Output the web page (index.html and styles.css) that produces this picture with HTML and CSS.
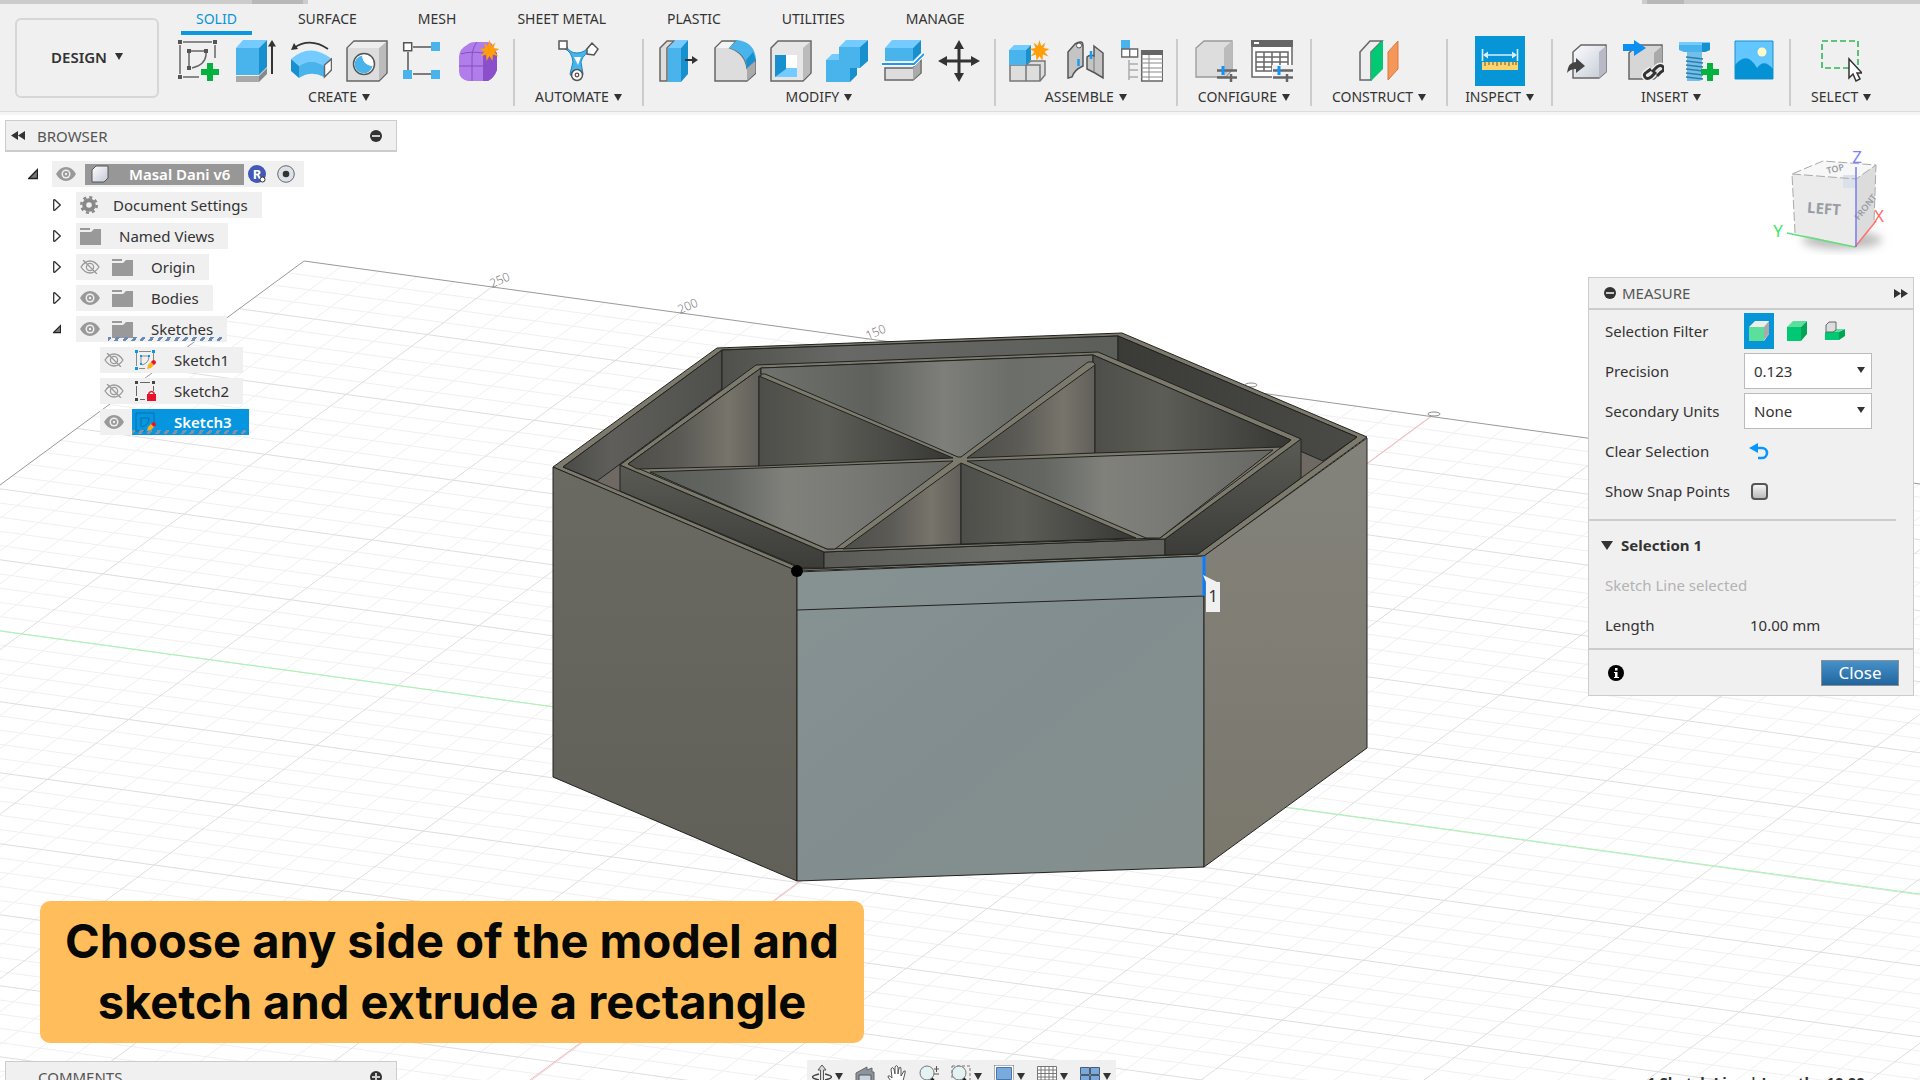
FILE: index.html
```html
<!DOCTYPE html>
<html lang="en">
<head>
<meta charset="utf-8">
<meta name="viewport" content="width=device-width, initial-scale=1">
<title>Masal Dani v6</title>
<link rel="stylesheet" href="styles.css">
</head>
<body>
<svg class="defs" aria-hidden="true">
  <defs>
    <linearGradient id="silver" x1="0" y1="0" x2="1" y2="1"><stop offset="0" stop-color="#fdfdff"/><stop offset="1" stop-color="#c3c9d4"/></linearGradient>
    <symbol id="eye" viewBox="0 0 20 14"><path d="M0 7Q4 0 10 0t10 7q-4 7-10 7T0 7z" fill="#999"/><circle cx="10" cy="7" r="4.5" fill="#f0f0f0"/><circle cx="10" cy="7" r="3" fill="#999"/><circle cx="10" cy="7" r="1.2" fill="#f0f0f0"/></symbol>
    <symbol id="eye-off" viewBox="0 0 20 14"><g fill="none" stroke="#999" stroke-width="1.3"><path d="M1 7q4-6 9-6t9 6q-4 6-9 6T1 7z"/><circle cx="10" cy="7" r="3.6"/><path d="M3 0l14 14"/></g></symbol>
    <symbol id="folder" viewBox="0 0 21 17"><path d="M0 0h10v2H0zM0 4h11l3-3h7v16H0z" fill="#999"/></symbol>
    <symbol id="closed" viewBox="0 0 8 12"><path d="M.7 1v10l1 .3L7.300 6 1.700.7z" fill="#fff" stroke="#333" stroke-width="1.300"/></symbol>
    <symbol id="open" viewBox="0 0 10 10"><path d="M9.500.5v9H.7z" fill="#777" stroke="#222" stroke-width="1.400"/></symbol>
    <symbol id="star" viewBox="0 0 20 22"><path d="M10 0l1.700 6L16 2.500 14 8l6 1-5 2.800 4 4.700-5.600-2L13 21l-3-5-3 5-.5-6.500-5.500 2 4-4.700L0 9l6-1-2-5.500L8.300 6z" fill="#ff9d0a"/></symbol>
    <symbol id="plus" viewBox="0 0 18 18"><path d="M6 0h6v6h6v6h-6v6H6v-6H0V6h6z" fill="#06b23f"/></symbol>
    <symbol id="sliders" viewBox="0 0 20 16"><path d="M0 4.500h20M0 11.500h20" stroke="#666" stroke-width="2.500"/><path d="M6 0v9" stroke="#0a96ff" stroke-width="3"/><path d="M14 8v8" stroke="#666" stroke-width="2.500"/></symbol>
  </defs>
</svg>

<header class="toolbar">
  <div class="tabstrip"><i class="strip strip-left"></i><i class="strip strip-right"></i></div>
  <div class="toolbar-main">
    <button class="workspace" type="button">DESIGN<i class="caret"></i></button>
    <div class="ribbon">
      <nav class="tabs">
        <a class="tab active" href="#solid">SOLID</a>
        <a class="tab" href="#surface">SURFACE</a>
        <a class="tab" href="#mesh">MESH</a>
        <a class="tab" href="#sheet">SHEET METAL</a>
        <a class="tab" href="#plastic">PLASTIC</a>
        <a class="tab" href="#utilities">UTILITIES</a>
        <a class="tab" href="#manage">MANAGE</a>
      </nav>
      <div class="groups">
        <section class="group">
          <div class="tools">
            <button class="tool" type="button" aria-label="Create sketch"><svg viewBox="0 0 42 42"><path d="M2 5v29M5 2h29M37 5v13M5 37h16M11 11v17M11 11h17v4Q27 25 14 28" fill="none" stroke="#666" stroke-width="1.500"/><path d="M0 0h4v4H0zM35 0h4v4h-4zM0 35h4v4H0zM9 9h4v4H9zM26 9h4v4h-4zM9 26h4v4H9z" fill="#555"/><use href="#plus" x="23" y="23" width="18" height="18"/></svg></button>
            <button class="tool" type="button" aria-label="Extrude"><svg viewBox="0 0 42 42"><path d="M2 36h23v6H2z" fill="#a9a9a9"/><path d="M25 36l8-8v6l-8 8z" fill="#888"/><path d="M2 8h23v27H2z" fill="#49b3ec"/><path d="M2 8l7-8h24l-8 8z" fill="#74cbff"/><path d="M25 8l8-8v27l-8 8z" fill="#1890cd"/><path d="M38 34V4" stroke="#333" stroke-width="2"/><path d="M34 6.500L38 0l4 6.500z" fill="#333"/></svg></button>
            <button class="tool" type="button" aria-label="Revolve"><svg viewBox="0 0 42 42"><path d="M1 19Q20 2 42 19l-8 7Q21 17 9 26z" fill="#74cbff"/><path d="M1 19l8 7v12l-8-7z" fill="#1890cd"/><path d="M9 26q12-9 25 0v11q-13-7-25 1z" fill="#49b3ec"/><path d="M34.500 25l7-6v11l-7 7z" fill="#fff" stroke="#666" stroke-width="1.500"/><path d="M4 8Q20-3 38 9" fill="none" stroke="#333" stroke-width="1.700"/><path d="M1 10l3-7 4 6z" fill="#333"/></svg></button>
            <button class="tool" type="button" aria-label="Hole"><svg viewBox="0 0 42 42"><path d="M1 8l7-7h33v32l-8 8H1z" fill="#ddd" stroke="#666" stroke-width="1.500"/><path d="M33 8l7-6v31l-7 7z" fill="#bbb"/><path d="M2 8l6-6h32l-7 6z" fill="#eee"/><circle cx="18" cy="24" r="10.500" fill="#fff" stroke="#555" stroke-width="1.500"/><path d="M16 15.500a9 9 0 1 0 10.500 10.500Q17 25 16 15.500z" fill="#49b3ec"/><path d="M16 15.500Q17 25 26.500 26q2-9-10.500-10.500z" fill="#fff"/></svg></button>
            <button class="tool" type="button" aria-label="Pattern"><svg viewBox="0 0 42 42"><path d="M11 7h18M6 12v18M11 34h18" stroke="#555" stroke-width="1.500"/><path d="M1.700 2.700h8v8h-8z" fill="#fff" stroke="#555" stroke-width="1.500"/><path d="M29 2h9v9h-9zM1 30h9v9H1zM29 30h9v9h-9z" fill="#49b3ec"/></svg></button>
            <button class="tool" type="button" aria-label="Create form"><svg viewBox="0 0 42 42"><path d="M9 5q3-3 8-3h12q5 0 6 4l4 10v14q-3 8-9 11H10q-9-2-9-10V17Q1 9 9 5z" fill="#b07dea"/><path d="M25 41V16q0-6 6-11l8 8v17q-3 8-9 11z" fill="#8b4fcb"/><path d="M1 26h25l13-5M14 41V18q0-10 5-16M3 14q9-3 22-1" fill="none" stroke="#8450c0"/><use href="#star" x="21" y="0" width="21" height="22"/></svg></button>
          </div>
          <button class="group-label" type="button">CREATE<i class="caret"></i></button>
        </section>
        <section class="group">
          <div class="tools">
            <button class="tool" type="button" aria-label="Automate"><svg viewBox="0 0 42 42"><path d="M6 8q9 3 10 14l-3 12a7 7 0 0 0 13 0l-2-12q2-9 13-12l-4-5q-5 8-13 8T9 5z" fill="#49b3ec" stroke="#1c86bd"/><path d="M17 17h7l-3 8z" fill="#fff"/><path d="M2 1h8v8H2zM30 9l5-6 6 6-4 6-7-1z" fill="#fff" stroke="#555" stroke-width="1.500"/><circle cx="20" cy="35" r="5.500" fill="#fff" stroke="#555" stroke-width="1.500"/><circle cx="20" cy="35" r="1.800" fill="none" stroke="#555" stroke-width="1.300"/></svg></button>
          </div>
          <button class="group-label" type="button">AUTOMATE<i class="caret"></i></button>
        </section>
        <section class="group wide">
          <div class="tools">
            <button class="tool" type="button" aria-label="Press pull"><svg viewBox="0 0 42 42"><path d="M9 1L2 8v33h7V8l7-7z" fill="#ddd" stroke="#666" stroke-width="1.500"/><path d="M10 8h13v34H10z" fill="#49b3ec"/><path d="M10 8l8-8h12l-7 8z" fill="#74cbff"/><path d="M23 8l7-8v34l-7 8z" fill="#1890cd"/><path d="M27 20h9" stroke="#333" stroke-width="2"/><path d="M34 16l6 4-6 4z" fill="#333"/></svg></button>
            <button class="tool" type="button" aria-label="Fillet"><svg viewBox="0 0 42 42"><path d="M1 8l7-7h14L16 8q15 5 17 20l9-8v13l-9 8H1z" fill="#ddd" stroke="#666" stroke-width="1.500"/><path d="M2 8l6-6h12l-5 6z" fill="#f4f4f4"/><path d="M33 28l8-7v12l-8 8z" fill="#aaa"/><path d="M15 8l8-8q18 2 19 20l-9 8Q31 12 15 8z" fill="#49b3ec"/><path d="M42 20l-9 8-1-8 7-8z" fill="#1890cd"/></svg></button>
            <button class="tool" type="button" aria-label="Shell"><svg viewBox="0 0 42 42"><path d="M1 8l7-7h33v32l-8 8H1z" fill="#e6e6e6" stroke="#666" stroke-width="1.500"/><path d="M33 8l7-6v31l-7 7z" fill="#bbb"/><path d="M5 15h22v22H5z" fill="#74cbff"/><path d="M5 15h11v14L5 37z" fill="#1890cd"/><path d="M16 15h11v13H16z" fill="#fff"/></svg></button>
            <button class="tool" type="button" aria-label="Combine"><svg viewBox="0 0 42 42"><path d="M0 20h13V7h21v21H24v14H0z" fill="#49b3ec"/><path d="M13 7l7-7h22l-8 7zM0 20l6-6h7v6z" fill="#74cbff"/><path d="M34 7l8-7v21l-8 7zM24 28h7v7l-7 7z" fill="#1890cd"/></svg></button>
            <button class="tool" type="button" aria-label="Split body"><svg viewBox="0 0 42 42"><path d="M3 28h28l8-8v13l-8 7H3z" fill="#ddd" stroke="#666" stroke-width="1.500"/><path d="M31 28l7-7v12l-7 7z" fill="#aaa"/><path d="M3 8h28v13H3z" fill="#49b3ec"/><path d="M3 8l7-8h29l-8 8z" fill="#74cbff"/><path d="M31 8l8-8v13l-8 8z" fill="#1890cd"/><path d="M0 24h32l10-10" fill="none" stroke="#fff" stroke-width="4"/><path d="M0 24h32l10-10" fill="none" stroke="#189cf0" stroke-width="1.800"/></svg></button>
            <button class="tool" type="button" aria-label="Move"><svg viewBox="0 0 42 42"><path d="M21 5v32M5 21h32" stroke="#333" stroke-width="3"/><path d="M21 0l5 9H16zM21 42l5-9H16zM0 21l9-5v10zM42 21l-9-5v10z" fill="#333"/></svg></button>
          </div>
          <button class="group-label" type="button">MODIFY<i class="caret"></i></button>
        </section>
        <section class="group">
          <div class="tools">
            <button class="tool" type="button" aria-label="New component"><svg viewBox="0 0 42 42"><path d="M1 25h16v16H1zM17 25l5-4h14v14l-5 6H17z" fill="#ddd" stroke="#777" stroke-width="1.500"/><path d="M17 25h14v16" fill="none" stroke="#777" stroke-width="1.500"/><path d="M0 10h17v15H0z" fill="#49b3ec"/><path d="M0 10l5-5h17l-5 5z" fill="#74cbff"/><path d="M17 10l5-5v15l-5 5z" fill="#1890cd"/><use href="#star" x="20" y="0" width="21" height="22"/></svg></button>
            <button class="tool" type="button" aria-label="Joint"><svg viewBox="0 0 42 42"><path d="M3 38V12l7-8q8-5 8 2v20q-9 4-11 11z" fill="#c4c4c4" stroke="#555" stroke-width="1.500"/><circle cx="14" cy="5.500" r="2.500" fill="#fff" stroke="#555"/><path d="M29 6l9 7v25l-8-5-8-4V17q3-3 7-1z" fill="#c4c4c4" stroke="#555" stroke-width="1.500"/><path d="M29 16v16" stroke="#777"/><path d="M13.500 19v7M26 11v8" stroke="#189cf0" stroke-width="2.500"/></svg></button>
            <button class="tool" type="button" aria-label="Bill of materials"><svg viewBox="0 0 42 42"><path d="M0 0h9v9H0z" fill="#49b3ec"/><path d="M.7 9h8v8H.700zM8.700 9h8v8h-8z" fill="#fff" stroke="#666" stroke-width="1.300"/><path d="M8 20v20M8 24h9M8 30h9M8 37h9" stroke="#aaa" stroke-width="1.500"/><path d="M20.700 11h21v30h-21z" fill="#fff" stroke="#666" stroke-width="1.500"/><path d="M20 10h22v5H20z" fill="#666"/><path d="M20 19h22M20 23h22M20 28h22M20 32h22M20 37h22M28 15v26" stroke="#888"/></svg></button>
          </div>
          <button class="group-label" type="button">ASSEMBLE<i class="caret"></i></button>
        </section>
        <section class="group">
          <div class="tools">
            <button class="tool" type="button" aria-label="Configure"><svg viewBox="0 0 42 42"><path d="M1 8l8-7h28v29l-6 7H1z" fill="#ddd" stroke="#999" stroke-width="1.300"/><path d="M29 8l8-7v27l-8 8z" fill="#bbb"/><use href="#sliders" x="22" y="26" width="20" height="16"/></svg></button>
            <button class="tool" type="button" aria-label="Configuration table"><svg viewBox="0 0 42 42"><path d="M1 1h40v36H1z" fill="#fff" stroke="#666" stroke-width="1.500"/><path d="M0 0h42v7H0z" fill="#666"/><path d="M3 2h5v2H3z" fill="#fff"/><path d="M5 12h32v19H5zM5 17h32M5 22h32M5 27h32M13 12v19M21 12v19M29 12v19" fill="none" stroke="#666" stroke-width="1.500"/><path d="M21 25h21v17H21z" fill="#f0f0f0"/><use href="#sliders" x="22" y="26" width="20" height="16"/></svg></button>
          </div>
          <button class="group-label" type="button">CONFIGURE<i class="caret"></i></button>
        </section>
        <section class="group">
          <div class="tools">
            <button class="tool" type="button" aria-label="Construction plane"><svg viewBox="0 0 42 42"><path d="M2 12L12 1h12L13 12v28H2z" fill="#eee" stroke="#666" stroke-width="1.500"/><path d="M13 12L25 0v29L13 41z" fill="#00c873"/><path d="M30 12L40 1v28L30 40z" fill="#f5975a" stroke="#d97b3f"/></svg></button>
          </div>
          <button class="group-label" type="button">CONSTRUCT<i class="caret"></i></button>
        </section>
        <section class="group narrow">
          <div class="tools">
            <button class="tool pressed" type="button" aria-label="Measure"><svg viewBox="0 0 50 50"><path d="M7.500 13v12M42.500 13v12M10 19h30" stroke="#d9eefb" stroke-width="1.600"/><path d="M8 19l5-3.500v7zM42 19l-5-3.500v7z" fill="#d9eefb"/><path d="M7 26h36v8H7z" fill="#ffd36b"/><path d="M10 26v4M14 26v3M18 26v3M22 26v4M26 26v3M30 26v3M34 26v4M38 26v3M41 26v3" stroke="#775" stroke-width="1.300"/></svg></button>
          </div>
          <button class="group-label" type="button">INSPECT<i class="caret"></i></button>
        </section>
        <section class="group">
          <div class="tools">
            <button class="tool" type="button" aria-label="Insert derive"><svg viewBox="0 0 42 42"><path d="M7 12l8-7h25v27l-7 6H7z" fill="url(#silver)" stroke="#666" stroke-width="1.500"/><path d="M33 12l7-6v26l-7 6z" fill="#b7bac6"/><path d="M1 33q1-11 9-11v-4l9 8-9 7v-4q-6 0-9 4z" fill="#444"/></svg></button>
            <button class="tool" type="button" aria-label="Insert linked"><svg viewBox="0 0 42 42"><path d="M7 13l8-8h25v27l-8 7H7z" fill="#d6d6d6" stroke="#666" stroke-width="1.500"/><path d="M32 13l8-7v26l-8 6z" fill="#aaa"/><path d="M1 4h11V0l12 8-12 8v-5H1z" fill="#0b8ff0"/><path d="M30 32l5-5q4-3 6 0t-2 5l-4 4M34 32l-5 5q-4 3-6 0t2-5l4-3" fill="none" stroke="#f0f0f0" stroke-width="6"/><path d="M30 32l5-5q4-3 6 0t-2 5l-4 4M34 32l-5 5q-4 3-6 0t2-5l4-3" fill="none" stroke="#333" stroke-width="3"/></svg></button>
            <button class="tool" type="button" aria-label="Insert fastener"><svg viewBox="0 0 42 42"><path d="M1 2h31v8l-5 2H6l-5-2z" fill="#49b3ec"/><path d="M1 2h31v3H1z" fill="#74cbff"/><path d="M24 3h8v7l-5 2h-3z" fill="#1890cd"/><path d="M9 12h15v28l-3 1H9z" fill="#74bfe8"/><path d="M8 17l17 2M8 21l17 2M8 25l17 2M8 29l17 2M8 33l17 2M8 37l17 2" stroke="#2b7eb0" stroke-width="1.500"/><use href="#plus" x="23" y="23" width="18" height="18"/></svg></button>
            <button class="tool" type="button" aria-label="Insert image"><svg viewBox="0 0 42 42"><path d="M1 1h38v38H1z" fill="#63c6ff" stroke="#1890cd"/><path d="M1 39V25q12-15 22 3 7-10 16 1v10z" fill="#0592d4"/><circle cx="28" cy="12" r="4.500" fill="#fdfbc6"/></svg></button>
          </div>
          <button class="group-label" type="button">INSERT<i class="caret"></i></button>
        </section>
        <section class="group">
          <div class="tools">
            <button class="tool" type="button" aria-label="Select"><svg viewBox="0 0 42 42"><path d="M2 1h36v27H2z" fill="none" stroke="#2fb558" stroke-width="1.600" stroke-dasharray="6 3"/><path d="M29 19v19l4-4 3 7 4-2-3-6h5z" fill="#fff" stroke="#333" stroke-width="1.500"/></svg></button>
          </div>
          <button class="group-label" type="button">SELECT<i class="caret"></i></button>
        </section>
      </div>
    </div>
  </div>
</header>

<main class="stage">
  <svg class="scene" viewBox="0 115 1920 965" preserveAspectRatio="xMidYMid slice" role="img" aria-label="Hexagonal box model">
    <defs>
      <linearGradient id="side-left" x1="0" y1="0" x2="0" y2="1"><stop offset="0" stop-color="#6a6962"/><stop offset="1" stop-color="#605f58"/></linearGradient>
      <linearGradient id="side-right" x1="0" y1="0" x2="0" y2="1"><stop offset="0" stop-color="#84837b"/><stop offset="1" stop-color="#7a776d"/></linearGradient>
      <linearGradient id="front" x1="0" y1="0" x2="1" y2="1"><stop offset="0" stop-color="#879293"/><stop offset=".5" stop-color="#828d8f"/><stop offset="1" stop-color="#848f8d"/></linearGradient>
      <linearGradient id="nw" x1="0" y1="0" x2="1" y2="0"><stop offset="0" stop-color="#494a46"/><stop offset=".3" stop-color="#5f5e5a"/><stop offset="1" stop-color="#4f504b"/></linearGradient>
      <linearGradient id="n" x1="0" y1="0" x2="1" y2="0"><stop offset="0" stop-color="#4f504b"/><stop offset=".3" stop-color="#686966"/><stop offset="1" stop-color="#5c5e5a"/></linearGradient>
      <linearGradient id="ne" x1="0" y1="0" x2="1" y2="0"><stop offset="0" stop-color="#3a3b37"/><stop offset="1" stop-color="#4a4b47"/></linearGradient>
      <linearGradient id="dark" x1="0" y1="0" x2="1" y2="0"><stop offset="0" stop-color="#4d4e49"/><stop offset=".35" stop-color="#5d5d57"/><stop offset="1" stop-color="#363734"/></linearGradient>
      <linearGradient id="bay" x1="0" y1="0" x2="1" y2="0"><stop offset="0" stop-color="#5a5c58"/><stop offset=".25" stop-color="#646662"/><stop offset=".45" stop-color="#80817b"/><stop offset=".65" stop-color="#797a75"/><stop offset="1" stop-color="#666762"/></linearGradient>
      <linearGradient id="bay-back" x1="0" y1="0" x2="1" y2="0"><stop offset="0" stop-color="#70726e"/><stop offset=".33" stop-color="#5f615c"/><stop offset=".55" stop-color="#7e7f7a"/><stop offset=".75" stop-color="#6c6e69"/><stop offset="1" stop-color="#70716c"/></linearGradient>
      <linearGradient id="lit" x1="0" y1="0" x2="1" y2="0"><stop offset="0" stop-color="#4d4d49"/><stop offset=".4" stop-color="#5b5a55"/><stop offset=".75" stop-color="#77746b"/><stop offset="1" stop-color="#615f59"/></linearGradient>
      <linearGradient id="well" x1="0" y1="0" x2="0" y2="1"><stop offset="0" stop-color="#5b5b56"/><stop offset="1" stop-color="#3c3c38"/></linearGradient>
      <linearGradient id="lip" x1="0" y1="0" x2="1" y2="0"><stop offset="0" stop-color="#5a5b56"/><stop offset=".5" stop-color="#6b6d68"/><stop offset="1" stop-color="#62635e"/></linearGradient>
      <filter id="soft" x="-30%" y="-30%" width="160%" height="160%"><feGaussianBlur stdDeviation="5"/></filter>
    </defs>
    <g class="grid">
      <path id="grid-minor" class="minor"/>
      <path id="grid-major" class="major"/>
      <path class="edge" d="M0 485L304 261 1920 484"/>
      <path class="axis-y" d="M0 631L1920 894"/>
      <path class="axis-x" d="M1430 417L530 1080"/>
    </g>
    <g class="ticks">
      <text transform="translate(492 288) rotate(-24)">250</text>
      <text transform="translate(680 314) rotate(-24)">200</text>
      <text transform="translate(868 340) rotate(-24)">150</text>
      <ellipse cx="1251" cy="385" rx="6" ry="2"/>
      <ellipse cx="1434" cy="414" rx="6" ry="2"/>
    </g>
    <g class="model">
      <path class="rim" d="M553 467L717 348 1122 333 1367 437 1204 556 797 571z"/>
      <path fill="#6e6962" d="M563 467L722 350 1118 336 1357 437 1198 554 802 569z"/>
      <path fill="url(#nw)" d="M563 467L722 350V389L597 481z"/>
      <path fill="url(#n)" d="M722 350L1118 336V400L722 400z"/>
      <path fill="url(#ne)" d="M1118 336L1357 437 1323 461 1118 372z"/>
      <path fill="url(#well)" d="M620 465L824 552V568H802L620 491z"/>
      <path fill="url(#lip)" d="M824 552L1165 539V555L824 568z"/>
      <path fill="url(#well)" d="M1165 539L1301 439V478L1198 554 1165 555z"/>
      <path class="rim" d="M620 465L756 365 1098 352 1301 439 1165 539 824 552z"/>
      <path class="rim" d="M628 464L761 368 1093 355 1291 440 1160 538 827 549z"/>
      <path fill="url(#lit)" d="M628 464L761 368V376H759V466L637 469z"/>
      <path fill="url(#dark)" d="M759 376L953 458 759 466z"/>
      <path fill="url(#bay-back)" d="M761 368L1093 355V362H1088L961 457H958L765 374H761z"/>
      <path fill="url(#lit)" d="M1095 365V453L967 458z"/>
      <path fill="url(#dark)" d="M1093 355L1291 440 1282 447 1095 453V364L1093 362z"/>
      <path fill="url(#bay)" d="M967 461L1273 450 1160 538H1146z"/>
      <path fill="url(#lit)" d="M961 463V544L843 549z"/>
      <path fill="url(#dark)" d="M961 463L1136 538 961 544z"/>
      <path fill="url(#bay)" d="M650 472L953 461 835 549H827z"/>
      <path class="face" fill="url(#side-left)" d="M553 467L797 571V881L553 777z"/>
      <path class="face" fill="url(#front)" d="M797 572L1204 556V867L797 881z"/>
      <path class="face" fill="url(#side-right)" d="M1204 556L1367 438V748L1204 867z"/>
      <path class="seam" d="M797 610L1204 596"/>
      <path class="picked" d="M1204 556V596"/>
      <circle cx="797" cy="571" r="6" fill="#000"/>
      <path d="M1203 575L1217 582H1220V612H1206V582z" fill="#f0f0f0"/>
      <text class="tag" x="1213" y="602">1</text>
    </g>
  </svg>

  <section class="browser">
    <header class="panel-head">
      <svg class="rewind" viewBox="0 0 14 9"><path d="M7 0v9L0 4.500zM14 0v9L7 4.500z"/></svg>
      <h2>BROWSER</h2>
      <button class="dot" type="button" aria-label="Collapse browser"></button>
    </header>
    <ul class="tree">
      <li class="row root"><svg class="twist"><use href="#open"/></svg>
        <div class="cell"><svg class="eye"><use href="#eye"/></svg><span class="doc"><svg viewBox="0 0 18 18"><path d="M1 5l4-4h12v12l-4 4H1z" fill="url(#silver)" stroke="#555"/></svg>Masal Dani v6</span><svg class="badge" viewBox="0 0 18 18"><circle cx="9" cy="9" r="9" fill="#4459b5"/><text x="9" y="14">R</text><circle cx="14.500" cy="14.500" r="2.500" fill="#fff" stroke="#333"/></svg><svg class="badge target" viewBox="0 0 18 18"><circle cx="9" cy="9" r="8.300" fill="#dde1e8" stroke="#666"/><circle cx="9" cy="9" r="3.300" fill="#333"/></svg></div></li>
      <li class="row"><svg class="twist"><use href="#closed"/></svg>
        <div class="cell"><svg class="gear" viewBox="0 0 18 18"><circle cx="9" cy="9" r="4.800" fill="none" stroke="#888" stroke-width="4"/><circle cx="9" cy="9" r="7.700" fill="none" stroke="#888" stroke-width="2.600" stroke-dasharray="3 3.050"/></svg><span class="name near">Document Settings</span></div></li>
      <li class="row"><svg class="twist"><use href="#closed"/></svg>
        <div class="cell"><svg class="folder"><use href="#folder"/></svg><span class="name">Named Views</span></div></li>
      <li class="row"><svg class="twist"><use href="#closed"/></svg>
        <div class="cell"><svg class="eye"><use href="#eye-off"/></svg><svg class="folder"><use href="#folder"/></svg><span class="name">Origin</span></div></li>
      <li class="row"><svg class="twist"><use href="#closed"/></svg>
        <div class="cell"><svg class="eye"><use href="#eye"/></svg><svg class="folder"><use href="#folder"/></svg><span class="name">Bodies</span></div></li>
      <li class="row"><svg class="twist"><use href="#open"/></svg>
        <div class="cell hatched"><svg class="eye"><use href="#eye"/></svg><svg class="folder"><use href="#folder"/></svg><span class="name">Sketches</span></div></li>
      <li class="row leaf">
        <div class="cell"><svg class="eye"><use href="#eye-off"/></svg><svg class="sketch" viewBox="0 0 21 20"><path d="M1.500 3v13M4 1.500h12M18.500 3v8M4 18.500h6M6 6v9M6 6h8q0 7-7 9" fill="none" stroke="#888"/><path d="M0 0h3v3H0zM17 0h3v3h-3zM0 17h3v3H0zM5 5h2v2H5zM13 5h2v2h-2zM5 13h2v2H5z" fill="#0a96ea"/><path d="M12 19l1-4 4-4 3 3-4 4z" fill="#f8b21b"/><path d="M16 12l2-2q3 0 3 3l-2 2z" fill="#e8132b"/></svg><span class="name">Sketch1</span></div></li>
      <li class="row leaf">
        <div class="cell"><svg class="eye"><use href="#eye-off"/></svg><svg class="sketch" viewBox="0 0 21 20"><path d="M1.500 5v10M5 1.500h10M18.500 5v5M5 18.500h5" fill="none" stroke="#666"/><path d="M0 0h3v3H0zM17 0h3v3h-3zM0 17h3v3H0z" fill="#444"/><path d="M14 14v-2q2.500-3 5 0v2" fill="none" stroke="#e8132b" stroke-width="1.500"/><path d="M12 13h9v7h-9z" fill="#e8132b"/></svg><span class="name">Sketch2</span></div></li>
      <li class="row leaf">
        <div class="cell split"><svg class="eye"><use href="#eye"/></svg><div class="selected hatched"><svg class="sketch" viewBox="0 0 21 20"><path d="M1 1h18v10M1 1v18h9M6 6v9M6 6h8q0 7-7 9" fill="none" stroke="#0a6fae"/><path d="M12 19l1-4 4-4 3 3-4 4z" fill="#f8b21b"/><path d="M16 12l2-2q3 0 3 3l-2 2z" fill="#e8132b"/></svg><span class="name">Sketch3</span></div></div></li>
    </ul>
  </section>

  <svg class="viewcube" viewBox="1770 140 124 125" role="img" aria-label="View cube">
    <ellipse cx="1842" cy="240" rx="40" ry="9" fill="#bbb" filter="url(#soft)"/>
    <path d="M1792 174L1823 161 1876 165 1856 179z" fill="#f7f7f7"/>
    <path d="M1856 179L1876 165 1874 222 1855 247z" fill="#dcdcdd"/>
    <path d="M1792 174L1856 179 1855 247 1795 233z" fill="#ebebec"/>
    <path d="M1843 175h13v13h-13z" fill="#dbe1e8"/>
    <path d="M1795 233L1792 174 1823 161 1876 165 1874 222M1792 174L1856 179 1876 165" fill="none" stroke="#aaa" stroke-dasharray="9 3"/>
    <text class="cube-face" transform="rotate(4 1824 209)" x="1824" y="214">LEFT</text>
    <text class="cube-side" transform="translate(1868 209) rotate(-52)">FRONT</text>
    <text class="cube-side" transform="translate(1836 172) rotate(-14)">TOP</text>
    <path d="M1787 233L1855 247" stroke="#5fe07a" stroke-width="1.500"/>
    <path d="M1855 247L1876 221" stroke="#ff7070" stroke-width="1.500"/>
    <path d="M1856 167V247" stroke="#7a7af0" stroke-width="1.500"/>
    <text class="axis" x="1857" y="163" fill="#7f7fff">Z</text>
    <text class="axis" x="1879" y="222" fill="#ff6b6b">X</text>
    <text class="axis" x="1778" y="237" fill="#3de868">Y</text>
  </svg>

  <form class="measure">
    <header class="panel-head">
      <button class="dot" type="button" aria-label="Collapse measure"></button>
      <h2>MEASURE</h2>
      <svg class="rewind" viewBox="0 0 14 9"><path d="M0 0v9l7-4.500zM7 0v9l7-4.500z"/></svg>
    </header>
    <div class="fields">
      <div class="field"><span class="key">Selection Filter</span>
        <div class="filters">
          <button class="filter on" type="button" aria-label="Faces"><svg viewBox="0 0 20 20"><path d="M0 6l6-6h14v13l-5 7H0z" fill="#eee"/><path d="M15 6l5-6v13l-5 6z" fill="#aaa"/><path d="M0 6h15v14H0z" fill="#5cdf9b"/></svg></button>
          <button class="filter" type="button" aria-label="Bodies"><svg viewBox="0 0 20 20"><path d="M0 6h14v14H0z" fill="#00c873"/><path d="M0 6l6-6h14l-6 6z" fill="#5cdf9b"/><path d="M14 6l6-6v13l-6 7z" fill="#00a653"/></svg></button>
          <button class="filter" type="button" aria-label="Components"><svg viewBox="0 0 20 20"><path d="M0 11h14v8H0z" fill="#00c873"/><path d="M14 11l5-3h-9l-2 3z" fill="#5cdf9b"/><path d="M14 11l6-3v7l-6 4z" fill="#00a653"/><path d="M1 4l3-3h7v8l-3 2H1z" fill="#ddd" stroke="#666"/></svg></button>
        </div></div>
      <div class="field"><label class="key" for="precision">Precision</label>
        <span class="picker"><select id="precision"><option>0.123</option></select></span></div>
      <div class="field"><label class="key" for="units">Secondary Units</label>
        <span class="picker"><select id="units"><option>None</option></select></span></div>
      <div class="field"><span class="key">Clear Selection</span>
        <button class="undo" type="button" aria-label="Clear selection"><svg viewBox="0 0 20 17"><path d="M5 5h8a5 5 0 0 1 0 10H9" fill="none" stroke="#0a96ff" stroke-width="2.600"/><path d="M0 5l9-5v10z" fill="#0a96ff"/></svg></button></div>
      <div class="field"><label class="key" for="snap">Show Snap Points</label>
        <input id="snap" class="tick" type="checkbox"></div>
    </div>
    <div class="result">
      <h3><i class="caret big"></i>Selection 1</h3>
      <p class="hint">Sketch Line selected</p>
      <div class="field"><span class="key">Length</span><output class="value">10.00 mm</output></div>
    </div>
    <footer class="measure-foot">
      <svg class="info" viewBox="0 0 16 16"><circle cx="8" cy="8" r="8"/><path d="M7 3h2.500v2.500H7zM6 7h3.500v5H11v1H6v-1h1V8H6z" fill="#fff"/></svg>
      <button class="close" type="button">Close</button>
    </footer>
  </form>

  <p class="caption">Choose any side of the model and sketch and extrude a rectangle</p>

  <section class="comments panel-head">
    <h2>COMMENTS</h2>
    <button class="dot add" type="button" aria-label="Expand comments"></button>
  </section>

  <nav class="viewbar" aria-label="Navigation">
    <button type="button" aria-label="Orbit"><svg viewBox="0 0 20 20"><path d="M10 0l4 5h-2.500v13h-3V5H6z" fill="#ddd" stroke="#555"/><path d="M7 9q-13 3 0 6M13 9q13 3 0 6" fill="none" stroke="#444" stroke-width="1.500"/></svg><i class="caret"></i></button>
    <button type="button" aria-label="Look at"><svg viewBox="0 0 20 20"><path d="M1 8l11-6v3l5-2v4h2v13H1z" fill="#8d939c" stroke="#666"/><path d="M4 10h12v9H4z" fill="#c9d2df" stroke="#555"/></svg></button>
    <button type="button" aria-label="Pan"><svg viewBox="0 0 20 20"><path d="M6 20Q3 14 1 12q0-3 4 1L4 4q1-3 3 0l1 5V2q1-3 3 0v7l1-6q2-2 2 1v7l3-5q2-1 1 2l-3 12" fill="#fff" stroke="#555"/></svg></button>
    <button type="button" aria-label="Zoom"><svg viewBox="0 0 20 20"><path d="M12 13l5 6" stroke="#222" stroke-width="3"/><circle cx="8" cy="8" r="7" fill="#e3f3f3" stroke="#777"/><path d="M15 4h5M17.500 1v6M15 9h5" stroke="#555"/></svg></button>
    <button type="button" aria-label="Zoom window"><svg viewBox="0 0 20 20"><path d="M1 1h18v18H1z" fill="none" stroke="#777" stroke-dasharray="3 2"/><path d="M12 13l5 6" stroke="#222" stroke-width="3"/><circle cx="8" cy="8" r="7" fill="#e3f3f3" stroke="#777"/></svg><i class="caret"></i></button>
    <button type="button" aria-label="Display settings"><svg viewBox="0 0 20 20"><path d="M0 0h20v17H0z" fill="#fff" stroke="#666"/><path d="M2.500 2.500h15v12h-15z" fill="#7aa9dc" stroke="#4677ad"/></svg><i class="caret"></i></button>
    <button type="button" aria-label="Grid and snaps"><svg viewBox="0 0 20 20"><path d="M.5 1.500h19v17H.5zM.5 5h19M.5 8.500h19M.5 12h19M.5 15h19M4 1v18M8 1v18M12 1v18M16 1v18" fill="#fff" stroke="#777"/></svg><i class="caret"></i></button>
    <button type="button" aria-label="Viewports"><svg viewBox="0 0 20 20"><path d="M.5 2.500h9v7h-9zM10.500 2.500h9v7h-9zM.5 10.500h9v7h-9zM10.500 10.500h9v7h-9z" fill="#7aa9dc" stroke="#4a5c70"/></svg><i class="caret"></i></button>
  </nav>
  <p class="status">1 Sketch Line | Length : 10.00 mm</p>
</main>
<script src="grid.js"></script>
</body>
</html>
```
FILE: styles.css
```css
* { box-sizing: border-box; }
body {
  margin: 0;
  height: 100vh;
  display: flex;
  flex-direction: column;
  overflow: hidden;
  background: #fff;
  color: #333;
  font-family: "Noto Sans", "Open Sans", sans-serif;
  font-size: 15px;
  line-height: 20px;
}
button { margin: 0; padding: 0; border: 0; background: none; color: inherit; font: inherit; }
h2, h3, p, ul { margin: 0; padding: 0; font-size: 15px; font-weight: 400; list-style: none; }
svg { display: block; flex: none; }
.defs { position: absolute; width: 0; height: 0; }
.caret {
  display: inline-block;
  border: 4px solid transparent;
  border-top: 7px solid #333;
  border-bottom: 0;
}
.caret.big { border-width: 9px 6px 0; }

/* toolbar */
.toolbar { flex: none; background: #f0f0f0; border-bottom: 3px solid #f5f5f5; }
.tabstrip { display: flex; justify-content: space-between; height: 4px; }
.strip-left { width: 308px; background: linear-gradient(90deg, #ccc 252px, #b8b8b8 252px 303px, #ccc 303px); }
.strip-right { width: 278px; background: linear-gradient(90deg, #ccc 5px, #b8b8b8 5px 42px, #ccc 42px); }
.toolbar-main { display: flex; height: 108px; padding-left: 15px; border-bottom: 1px solid #dcdcdc; }
.workspace {
  display: flex;
  align-items: center;
  justify-content: center;
  gap: 8px;
  width: 144px;
  height: 80px;
  margin: 14px 6px 0 0;
  padding-bottom: 3px;
  border: 2px solid #d6d6d6;
  border-radius: 6px;
  font-weight: 600;
}
.ribbon { flex: 1; min-width: 0; }
.tabs { display: flex; gap: 31px; padding-left: 16px; }
.tab { padding: 5px 15px 2px; border-bottom: 4px solid transparent; color: #333; font-size: 14px; line-height: 20px; text-decoration: none; white-space: nowrap; }
.tab.active { color: #0696d7; border-color: #0a98df; }
.groups { display: flex; margin-top: 4px; }
.group { display: flex; flex-direction: column; align-items: center; height: 67px; padding: 0 13px; border-right: 2px solid #ccc; }
.group.wide { padding: 0 14px; }
.group.narrow { padding: 0 10px; }
.group:last-child { border-right: 0; }
.tools { display: flex; justify-content: center; gap: 14px; height: 42px; margin-top: 1px; }
.tool svg { width: 42px; height: 42px; }
.tool.pressed { height: 50px; margin-top: -4px; background: #0696d7; }
.tool.pressed svg { width: 50px; height: 50px; }
.group-label { display: flex; align-items: center; gap: 5px; margin-top: 5px; padding: 0 7px; font-size: 14px; line-height: 20px; white-space: nowrap; }

/* canvas */
.stage { position: relative; flex: 1; min-height: 0; overflow: hidden; }
.scene { width: 100%; height: 100%; }
.grid path { fill: none; stroke-width: 1; }
.grid .minor { stroke: #f0f0f0; }
.grid .major { stroke: #dedede; }
.grid .edge { stroke: #999; }
.grid .axis-y { stroke: #a5f7ae; }
.grid .axis-x { stroke: #fbb5b5; }
.ticks text { fill: #666; font-size: 12px; font-family: "Open Sans", sans-serif; font-weight: 300; }
.ticks ellipse { fill: none; stroke: #888; }
.model path { stroke: #22221f; stroke-width: 1; stroke-linejoin: round; }
.model .rim { fill: #7c796d; }
.model .picked { stroke: #0a7cff; stroke-width: 3; }
.model path[fill="#f0f0f0"] { stroke: none; }
.tag { fill: #333; font-size: 16px; text-anchor: middle; }

/* panels */
.panel-head { display: flex; align-items: center; background: #f0f0f0; border: 1px solid #ccc; }
.panel-head h2 { color: #555; }
.rewind { width: 14px; height: 9px; fill: #333; }
.dot { position: relative; width: 12px; height: 12px; border-radius: 6px; background: #333; }
.dot::before, .dot.add::after { content: ""; position: absolute; left: 2px; top: 5px; width: 8px; height: 2px; background: #ccc; }
.dot.add::after { left: 5px; top: 2px; width: 2px; height: 8px; }
.browser { position: absolute; left: 5px; top: 5px; width: 392px; }
.browser .panel-head { height: 32px; padding: 0 14px 0 5px; border-bottom-width: 2px; }
.browser h2 { flex: 1; padding-left: 12px; }
.tree { display: grid; gap: 5px; padding-top: 9px; }
.row { display: flex; align-items: center; padding-left: 48px; }
.row.root { padding-left: 23px; }
.row.leaf { padding-left: 95px; }
.twist { width: 8px; height: 12px; margin-right: 15px; }
.root .twist { width: 10px; margin-right: 14px; }
.cell { display: flex; align-items: center; height: 26px; padding: 0 14px 0 4px; background: #f0f0f0; }
.root .cell { padding-right: 9px; }
.eye { width: 20px; height: 14px; margin-right: 12px; }
.root .eye { margin-right: 9px; }
.folder { width: 21px; height: 17px; }
.gear { width: 18px; height: 18px; }
.sketch { width: 21px; height: 20px; }
.name { padding-left: 18px; white-space: nowrap; }
.name.near { padding-left: 15px; }
.leaf .eye { margin-right: 11px; }
.doc { display: flex; align-items: center; gap: 20px; height: 21px; padding: 0 14px 0 6px; background: #979797; color: #fff; font-weight: 600; white-space: nowrap; }
.doc svg { width: 18px; height: 18px; }
.badge { width: 18px; height: 18px; margin-left: 4px; }
.badge.target { margin-left: 11px; }
.badge text { fill: #fff; font-size: 13px; font-weight: 700; text-anchor: middle; }
.hatched { position: relative; }
.hatched::after {
  content: "";
  position: absolute;
  left: 32px;
  right: 3px;
  bottom: 1px;
  height: 4px;
  background: repeating-linear-gradient(125deg, #6a8bb5 0 3px, transparent 3px 7px);
}
.cell.split { padding-right: 0; }
.split .eye { margin-right: 8px; }
.selected { display: flex; align-items: center; height: 26px; padding: 0 17px 0 3px; background: #0696e0; color: #fff; font-weight: 600; }
.selected.hatched::after { left: 0; background: repeating-linear-gradient(125deg, #8193a5 0 3px, transparent 3px 7px); }

.viewcube { position: absolute; top: 25px; right: 26px; width: 124px; height: 125px; }
.viewcube text { text-anchor: middle; }
.cube-face { fill: #999ca3; font-size: 15px; font-weight: 700; }
.cube-side { fill: #999ca3; font-size: 9px; font-weight: 600; }
.axis { font-size: 17px; }

.measure { position: absolute; top: 162px; right: 6px; width: 326px; background: #f0f0f0; border: 1px solid #ccc; }
.measure .panel-head { height: 32px; padding: 0 5px 0 15px; border-width: 0 0 2px; }
.measure h2 { flex: 1; padding-left: 6px; }
.fields { display: grid; gap: 4px; margin-right: 17px; padding: 3px 0 10px 16px; border-bottom: 2px solid #ccc; }
.field { display: flex; align-items: center; height: 36px; }
.key { width: 139px; white-space: nowrap; }
.filters { display: flex; gap: 8px; }
.filter { display: grid; place-items: center; width: 30px; height: 36px; }
.filter.on { background: #0696d7; }
.filter svg { width: 20px; height: 20px; }
.picker { position: relative; width: 128px; height: 36px; }
.picker::after { content: ""; position: absolute; right: 7px; top: 14px; border: 4px solid transparent; border-top: 6px solid #333; border-bottom: 0; }
.picker select { width: 100%; height: 100%; padding: 0 9px; border: 1px solid #bbb; border-radius: 0; background: #fff; color: #333; font: inherit; appearance: none; }
.undo { margin-left: 5px; }
.undo svg { width: 20px; height: 17px; }
.tick { appearance: none; width: 17px; height: 17px; margin: 0 0 0 7px; border: 2px solid #555; border-radius: 4px; background: linear-gradient(#f4f4f4, #bbb); }
.result { display: grid; gap: 4px; padding: 6px 0 5px 16px; border-bottom: 2px solid #ccc; line-height: 36px; }
.result h3 { display: flex; align-items: center; gap: 8px; margin-left: -4px; font-weight: 700; }
.hint { color: #b3b3b3; }
.value { padding-left: 6px; }
.measure-foot { display: flex; align-items: center; justify-content: space-between; height: 45px; padding: 0 14px 0 19px; }
.info { width: 16px; height: 16px; }
.close { width: 78px; height: 26px; border: 1px solid #8a8f94; background: linear-gradient(#4691c9, #21659e); color: #fff; font-size: 17px; line-height: 20px; }

.caption {
  position: absolute;
  left: 40px;
  bottom: 37px;
  width: 824px;
  padding: 9px 12px 11px;
  border-radius: 10px;
  background: #ffbd5b;
  color: #050805;
  font: 700 47px/61px Inter, sans-serif;
  text-align: center;
}
.comments { position: absolute; left: 5px; bottom: -13px; width: 392px; height: 32px; padding: 0 14px 0 32px; }
.comments h2 { flex: 1; }
.viewbar { position: absolute; left: 50%; bottom: -12px; display: flex; gap: 10px; height: 32px; padding: 5px 4px 0; margin-left: -153px; background: #f0f0f0; }
.viewbar button { display: flex; gap: 3px; padding: 0 1px; }
.viewbar svg { width: 20px; height: 20px; }
.viewbar .caret { margin-top: 8px; }
.status { position: absolute; right: 22px; bottom: -12px; font-weight: 700; }
```
FILE: grid.js
```js
// Ground plane grid: two families of parallel lines, a major one every five cells.
(function () {
  var minor = '', major = '';
  var slopeY = 0.1375, slopeX = -0.7375;
  function add(d, isMajor) { if (isMajor) major += d; else minor += d; }

  // Lines parallel to the Y axis, clipped at the left border of the plane.
  for (var i = 1; i < 66; i++) {
    var c = 219 + i * 14.2;
    var x = Math.max(0, (485 - c) / (slopeY - slopeX));
    add('M' + x.toFixed(1) + ' ' + (c + slopeY * x).toFixed(1) + 'L1920 ' + (c + slopeY * 1920).toFixed(1), (i - 4) % 5 === 0);
  }
  // Lines parallel to the X axis, starting on the far border.
  for (var k = 1; k < 80; k++) {
    var sx = 304 + k * 37.6, sy = 261 + k * 5.17;
    add('M' + sx.toFixed(1) + ' ' + sy.toFixed(1) + 'L' + (sx - 1400).toFixed(1) + ' ' + (sy - slopeX * 1400).toFixed(1), k % 5 === 0);
  }
  document.getElementById('grid-minor').setAttribute('d', minor);
  document.getElementById('grid-major').setAttribute('d', major);
})();
```
